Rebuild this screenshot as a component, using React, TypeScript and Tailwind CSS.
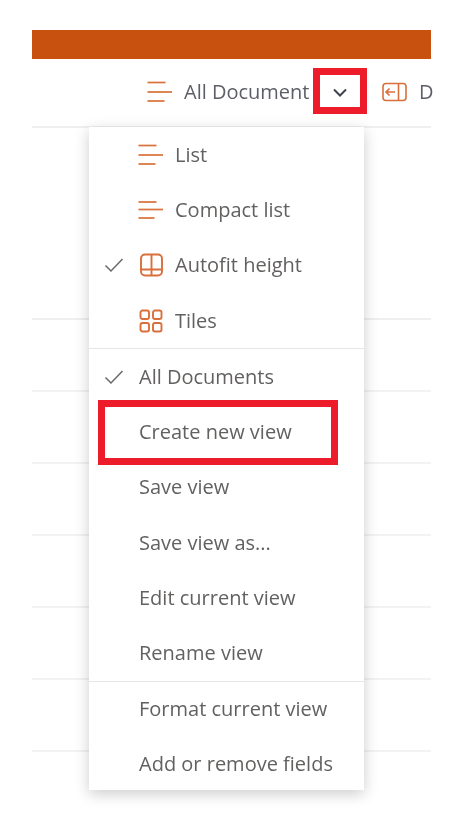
import { ReactNode } from "react";

const ORANGE = "#d9703a";

function ListIcon({ compact }: { compact?: boolean }) {
  return (
    <svg className="shrink-0" width="26" height="22" viewBox="0 0 26 22" fill="none" stroke={ORANGE} strokeWidth="1.7">
      <path d={compact ? "M0.5 3h18" : "M0.5 1.5h18"} />
      <path d={compact ? "M0.5 10.5h24.5" : "M0.5 11h24.5"} />
      <path d={compact ? "M0.5 19h16" : "M0.5 20h17"} />
    </svg>
  );
}

function AutofitIcon() {
  return (
    <svg width="24" height="24" viewBox="0 0 24 24" fill="none" stroke={ORANGE} strokeWidth="1.9">
      <rect x="2" y="1.5" width="21" height="21" rx="4" />
      <path d="M2 16.5h21M12.5 1.5v21" />
    </svg>
  );
}

function TilesIcon() {
  return (
    <svg width="24" height="24" viewBox="0 0 24 24" fill="none" stroke={ORANGE} strokeWidth="1.9">
      <rect x="1.5" y="1.5" width="8.5" height="8.5" rx="2" />
      <rect x="14" y="1.5" width="8.5" height="8.5" rx="2" />
      <rect x="1.5" y="14" width="8.5" height="8.5" rx="2" />
      <rect x="14" y="14" width="8.5" height="8.5" rx="2" />
    </svg>
  );
}

function PaneIcon() {
  return (
    <svg className="shrink-0" width="26" height="20" viewBox="0 0 26 20" fill="none" stroke={ORANGE} strokeWidth="1.6">
      <rect x="1" y="1.5" width="23" height="17" rx="3" />
      <path d="M16.5 1.5v17M13 10H4M7.5 6.5 4 10 7.5 13.5" />
    </svg>
  );
}

function Check() {
  return (
    <svg width="20" height="16" viewBox="0 0 20 16" fill="none" stroke="#6b6967" strokeWidth="1.5">
      <path d="M1.5 8.5 7 14 18.5 2" />
    </svg>
  );
}

function MenuRow({ label, icon, checked }: { label: string; icon?: ReactNode; checked?: boolean }) {
  return (
    <div className="flex h-[55.3px] items-center text-[20px] text-[#636160]">
      <span className="flex w-[50px] shrink-0 justify-center">{checked && <Check />}</span>
      {icon && <span className="-ml-[1px] mr-[11px] flex w-[26px] shrink-0 justify-center">{icon}</span>}
      <span className="whitespace-nowrap">{label}</span>
    </div>
  );
}

export default function App() {
  return (
    <div className="relative h-[819px] w-[465px] overflow-hidden bg-white font-['Open_Sans','Noto_Sans',sans-serif] blur-[0.5px]">
      <div className="ml-8 w-[399px] pt-[30px]">
        <div className="h-[29px] bg-[#c8510f]" />
        <div className="flex h-[69px] items-center border-b-2 border-[#efefef] pb-[1px] pl-[115px]">
          <ListIcon />
          <span className="ml-[11px] w-[129px] shrink-0 whitespace-nowrap text-[20px] text-[#5d5f66]">All Document</span>
          <svg className="ml-[20px] shrink-0" width="14" height="9" viewBox="0 0 14 9" fill="none" stroke="#3f4350" strokeWidth="2">
            <path d="M1 1.5 7 7.5 13 1.5" />
          </svg>
          <span className="ml-[35px] shrink-0">
            <PaneIcon />
          </span>
          <span className="ml-[11px] whitespace-nowrap text-[20px] text-[#5d5f66]">D</span>
        </div>
        <div className="h-[192px] border-b-2 border-[#efefef]" />
        {[0, 1, 2, 3, 4, 5].map((i) => (
          <div key={i} className="h-[72px] border-b-2 border-[#f2f2f2]" />
        ))}
      </div>

      <div className="absolute left-[89px] top-[127px] w-[275px] bg-white shadow-[0_4px_14px_rgba(0,0,0,0.2)]">
        <div className="border-b border-[#e8e6e4]">
          <MenuRow label="List" icon={<ListIcon />} />
          <MenuRow label="Compact list" icon={<ListIcon compact />} />
          <MenuRow label="Autofit height" icon={<AutofitIcon />} checked />
          <MenuRow label="Tiles" icon={<TilesIcon />} />
        </div>
        <div className="border-b border-[#e8e6e4]">
          <MenuRow label="All Documents" checked />
          <MenuRow label="Create new view" />
          <MenuRow label="Save view" />
          <MenuRow label="Save view as..." />
          <MenuRow label="Edit current view" />
          <MenuRow label="Rename view" />
        </div>
        <div className="-mt-[1px] h-[109px]">
          <MenuRow label="Format current view" />
          <MenuRow label="Add or remove fields" />
        </div>
      </div>

      <div className="absolute left-[313px] top-[68px] h-[46px] w-[54px] border-[7px] border-[#ed1c2a]" />
      <div className="absolute left-[98px] top-[400px] h-[65px] w-[240px] border-[7px] border-[#ed1c2a]" />
    </div>
  );
}
